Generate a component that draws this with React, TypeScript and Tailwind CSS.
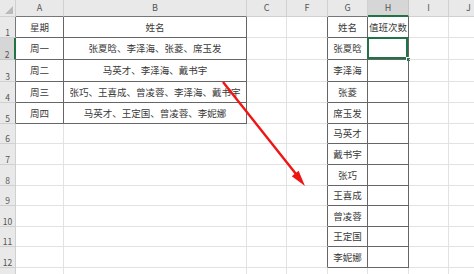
import React from 'react';

const cols = ['A', 'B', 'C', 'F', 'G', 'H', 'I', 'J'];
const rowHeights = [21, 22, 22, 21, 21, 20, 21, 21, 20, 21, 20, 21, 20];

const schedule: Record<number, [string, string]> = {
  1: ['星期', '姓名'],
  2: ['周一', '张夏晗、李泽海、张菱、席玉发'],
  3: ['周二', '马英才、李泽海、戴书宇'],
  4: ['周三', '张巧、王喜成、曾凌蓉、李泽海、戴书宇'],
  5: ['周四', '马英才、王定国、曾凌蓉、李妮娜'],
};

const names = ['姓名', '张夏晗', '李泽海', '张菱', '席玉发', '马英才', '戴书宇', '张巧', '王喜成', '曾凌蓉', '王定国', '李妮娜'];

function inLeftTable(r: number, c: number) {
  return r >= 1 && r <= 5 && c >= 1 && c <= 2;
}
function inRightTable(r: number, c: number) {
  return r >= 1 && r <= 12 && c >= 5 && c <= 6;
}

function cellText(r: number, c: number) {
  if (c <= 2 && schedule[r]) return schedule[r][c - 1];
  if (c === 5 && r <= 12) return names[r - 1];
  if (c === 6 && r === 1) return '值班次数';
  return '';
}

function Cell({ r, c }: { r: number; c: number }) {
  const rightDark = inLeftTable(r, c) || inRightTable(r, c) || (c === 4 && r <= 12);
  const bottomDark = inLeftTable(r, c) || inRightTable(r, c);
  const selected = r === 2 && c === 6;
  return (
    <div
      className={
        'relative flex items-center justify-center border-r border-b text-[9.5px] text-[#3a3a3a] whitespace-nowrap ' +
        (rightDark ? 'border-r-[#666] ' : 'border-r-[#e2e2e2] ') +
        (bottomDark ? 'border-b-[#666]' : 'border-b-[#e2e2e2]')
      }
    >
      {cellText(r, c)}
      {selected && (
        <>
          <div className="absolute -left-[1px] -top-[1px] right-0 bottom-0 border-2 border-[#217346]" />
          <div className="absolute -right-[3px] -bottom-[3px] w-[5px] h-[5px] bg-[#217346] border border-white" />
        </>
      )}
    </div>
  );
}

export default function App() {
  return (
    <div className="relative w-[474px] h-[274px] overflow-hidden bg-white" style={{ fontFamily: '"Noto Sans CJK SC", "Noto Sans", sans-serif' }}>
      <div className="grid grid-cols-[16px_48px_183px_40px_41px_40px_41px_40px_40px] grid-rows-[17px_21px_22px_22px_21px_21px_20px_21px_21px_20px_21px_20px_21px_20px]">
        {/* 左上角 */}
        <div className="relative bg-[#e9e9e9] border-r border-b border-[#d0d0d0]">
          <svg className="absolute right-[2px] bottom-[2px]" width="8" height="8" viewBox="0 0 8 8">
            <polygon points="8,0 8,8 0,8" fill="#b9b9b9" />
          </svg>
        </div>
        {/* 列标题 */}
        {cols.map((name, i) => {
          const c = i + 1;
          const sel = c === 6;
          const dark = c === 1 || c === 2 || c === 5;
          return (
            <div
              key={name}
              className={
                'flex items-center justify-center border-r border-b text-[9px] text-[#555] ' +
                (sel
                  ? 'bg-[#d6d6d6] border-r-[#c6c6c6] border-b-2 border-b-[#217346]'
                  : 'bg-[#e9e9e9] border-r-[#d0d0d0] ' + (dark ? 'border-b-[#777]' : 'border-b-[#d0d0d0]'))
              }
            >
              {name}
            </div>
          );
        })}
        {rowHeights.map((_, ri) => {
          const r = ri + 1;
          const sel = r === 2;
          return (
            <React.Fragment key={r}>
              <div
                className={
                  'flex items-end justify-center pb-[1px] border-b text-[8.5px] leading-none text-[#555] ' +
                  (sel
                    ? 'bg-[#d6d6d6] border-r-2 border-r-[#217346] border-b-[#c6c6c6]'
                    : 'bg-[#e9e9e9] border-r border-b-[#d0d0d0] ' + (r <= 5 ? 'border-r-[#777]' : 'border-r-[#d0d0d0]'))
                }
              >
                {r}
              </div>
              {cols.map((_, ci) => (
                <Cell key={ci} r={r} c={ci + 1} />
              ))}
            </React.Fragment>
          );
        })}
      </div>
      {/* 红色箭头 */}
      <svg className="absolute left-0 top-0 pointer-events-none" width="474" height="274" viewBox="0 0 474 274">
        <line x1="223" y1="82" x2="296" y2="174" stroke="#f01515" strokeWidth="2.4" />
        <polygon points="305,186 291.8,176.2 298.6,170.8" fill="#f01515" />
      </svg>
    </div>
  );
}
